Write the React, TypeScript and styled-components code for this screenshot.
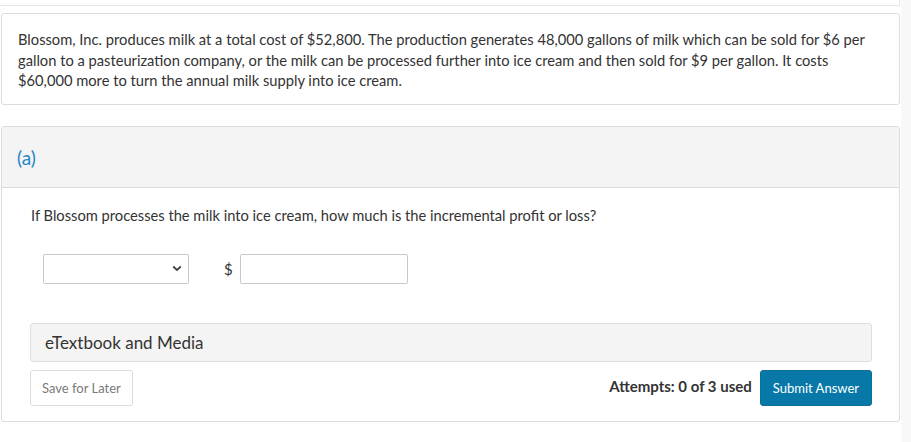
import styled, { createGlobalStyle } from "styled-components";

const GlobalStyle = createGlobalStyle`
  * { box-sizing: border-box; }
  html, body { margin: 0; padding: 0; background: #fff; }
  body {
    font-family: Lato, "Open Sans", Arial, sans-serif;
    color: #333;
  }
`;

const Page = styled.div`
  display: flex;
  width: 911px;
  height: 442px;
  overflow: hidden;
`;

const Main = styled.div`
  width: 900px;
  padding-left: 1px;
  display: flex;
  flex-direction: column;
`;

const Track = styled.div`
  flex: 1;
  margin-left: 1px;
  background: #f8f8f8;
`;

const PrevEdge = styled.div`
  height: 6px;
  margin-left: -1px;
  border-bottom: 1px solid #e6e6e6;
  border-right: 1px solid #e6e6e6;
`;

const Card = styled.div<{ $gap?: number }>`
  margin-top: ${(p) => p.$gap ?? 0}px;
  border: 1px solid #dcdcdc;
  border-radius: 3px;
  background: #fff;
`;

const Problem = styled.p`
  margin: 0;
  padding: 15px 16px 13px;
  font-size: 14.7px;
  line-height: 20.5px;
  color: #333;
`;

const PartHeader = styled.div`
  height: 61px;
  padding: 0 15px;
  display: flex;
  align-items: center;
  background: #f4f4f4;
  border-bottom: 1px solid #dcdcdc;
  border-radius: 3px 3px 0 0;
`;

const PartLabel = styled.span`
  font-size: 19px;
  color: #1f86c6;
  padding-top: 1px;
`;

const PartBody = styled.div`
  padding: 17px 27px 15px 28px;
`;

const Question = styled.p`
  margin: 0;
  padding-left: 1px;
  font-size: 14.7px;
  line-height: 20px;
  color: #333;
`;

const AnswerRow = styled.div`
  margin-top: 29px;
  padding-left: 13px;
  display: flex;
  align-items: center;
`;

const SelectBox = styled.div`
  width: 146px;
  height: 30px;
  border: 1px solid #c9c9c9;
  border-radius: 2px;
  background: #fff;
  display: flex;
  align-items: center;
  justify-content: flex-end;
  padding-right: 6px;
`;

const Dollar = styled.span`
  margin-left: 35px;
  margin-right: 7px;
  font-size: 15px;
  color: #333;
`;

const TextInput = styled.input`
  width: 168px;
  height: 30px;
  border: 1px solid #c9c9c9;
  border-radius: 2px;
  outline: none;
  padding: 0 6px;
  font-family: inherit;
`;

const MediaBar = styled.div`
  margin-top: 39px;
  height: 39px;
  padding: 0 14px;
  display: flex;
  align-items: center;
  background: #f4f4f4;
  border: 1px solid #dedede;
  border-radius: 3px;
  font-size: 17px;
  color: #333;
`;

const Footer = styled.div`
  margin-top: 8px;
  display: flex;
  align-items: center;
`;

const Button = styled.button<{ $primary?: boolean }>`
  height: 36px;
  padding: 0 ${(p) => (p.$primary ? 12 : 11)}px;
  border-radius: 3px;
  font-family: inherit;
  font-size: 13px;
  cursor: pointer;
  border: 1px solid ${(p) => (p.$primary ? "#0b6f9c" : "#dcdcdc")};
  background: ${(p) => (p.$primary ? "#0878a8" : "#fff")};
  color: ${(p) => (p.$primary ? "#fff" : "#7a7a7a")};
`;

const Attempts = styled.span`
  margin-left: auto;
  margin-right: 8px;
  font-size: 15px;
  font-weight: 700;
  color: #333;
  padding-bottom: 4px;
`;

const Chevron = () => (
  <svg width="10" height="7" viewBox="0 0 10 7">
    <path d="M1.2 1.5 L5 5 L8.8 1.5" fill="none" stroke="#444" strokeWidth="1.8" />
  </svg>
);

export default function App() {
  return (
    <Page>
      <GlobalStyle />
      <Main>
        <PrevEdge />
        <Card $gap={7}>
          <Problem>
            Blossom, Inc. produces milk at a total cost of $52,800. The production generates 48,000 gallons of milk
            which can be sold for $6 per gallon to a pasteurization company, or the milk can be processed further into
            ice cream and then sold for $9 per gallon. It costs $60,000 more to turn the annual milk supply into ice
            cream.
          </Problem>
        </Card>
        <Card $gap={21}>
          <PartHeader>
            <PartLabel>(a)</PartLabel>
          </PartHeader>
          <PartBody>
            <Question>If Blossom processes the milk into ice cream, how much is the incremental profit or loss?</Question>
            <AnswerRow>
              <SelectBox>
                <Chevron />
              </SelectBox>
              <Dollar>$</Dollar>
              <TextInput type="text" />
            </AnswerRow>
            <MediaBar>eTextbook and Media</MediaBar>
            <Footer>
              <Button>Save for Later</Button>
              <Attempts>Attempts: 0 of 3 used</Attempts>
              <Button $primary>Submit Answer</Button>
            </Footer>
          </PartBody>
        </Card>
      </Main>
      <Track />
    </Page>
  );
}
